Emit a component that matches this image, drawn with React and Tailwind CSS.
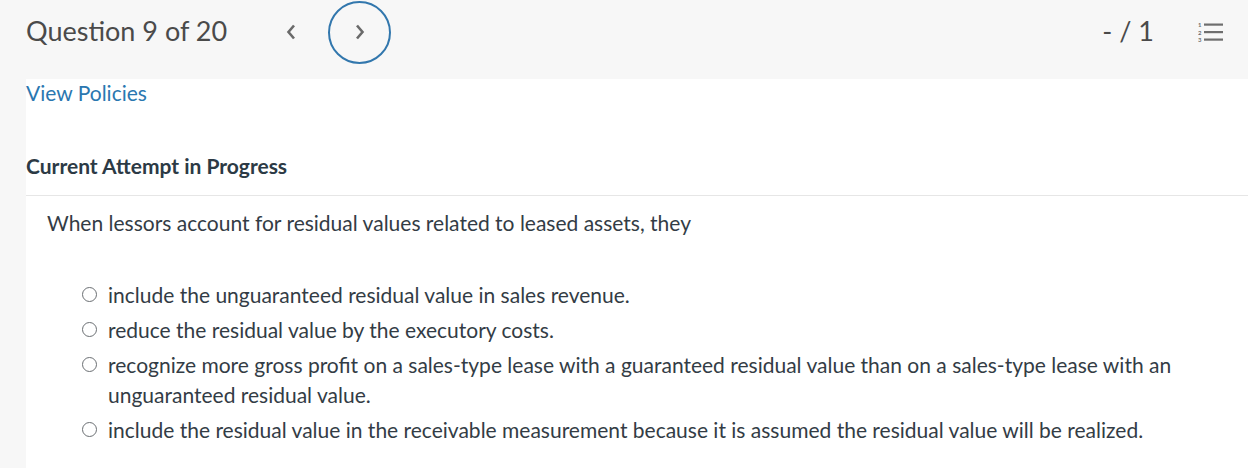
function Radio() {
  return (
    <span className="mt-[7px] w-[15px] h-[15px] rounded-full border border-[#6b6f73] shrink-0 bg-white" />
  );
}

function ListIcon() {
  return (
    <svg width="26" height="22" viewBox="0 0 26 22" className="text-[#6e6e6e]">
      <text x="0" y="6" fontSize="6" fill="currentColor" fontFamily="Lato, sans-serif" fontWeight="700">1</text>
      <text x="0" y="13.5" fontSize="6" fill="currentColor" fontFamily="Lato, sans-serif" fontWeight="700">2</text>
      <text x="0" y="21" fontSize="6" fill="currentColor" fontFamily="Lato, sans-serif" fontWeight="700">3</text>
      <rect x="6" y="2.5" width="19" height="2.2" fill="currentColor" />
      <rect x="6" y="10" width="19" height="2.2" fill="currentColor" />
      <rect x="6" y="17.5" width="19" height="2.2" fill="currentColor" />
    </svg>
  );
}

const options = [
  "include the unguaranteed residual value in sales revenue.",
  "reduce the residual value by the executory costs.",
  "recognize more gross profit on a sales-type lease with a guaranteed residual value than on a sales-type lease with an unguaranteed residual value.",
  "include the residual value in the receivable measurement because it is assumed the residual value will be realized.",
];

export default function App() {
  return (
    <div className="w-[1248px] h-[468px] bg-[#f7f7f7] font-['Lato',sans-serif] overflow-hidden">
      <header className="h-[79px] flex items-start pt-[1px] pl-[26px] pr-[24px]">
        <div className="flex items-center h-[62px]">
          <h1 className="text-[27px] text-[#4a4a4a] leading-none -mt-[3px]">Question 9 of 20</h1>
          <button className="ml-[44px] w-[40px] h-[40px] flex items-center justify-center text-[#6a6a6a]">
            <svg width="10" height="16" viewBox="0 0 10 16">
              <path d="M8 1.5 L2.5 8 L8 14.5" fill="none" stroke="currentColor" strokeWidth="2.6" />
            </svg>
          </button>
          <button className="ml-[17px] w-[63px] h-[63px] rounded-full border-2 border-[#3277ad] flex items-center justify-center text-[#6a6a6a]">
            <svg width="10" height="16" viewBox="0 0 10 16">
              <path d="M2 1.5 L7.5 8 L2 14.5" fill="none" stroke="currentColor" strokeWidth="2.6" />
            </svg>
          </button>
        </div>
        <div className="ml-auto flex items-center h-[62px]">
          <span className="text-[27px] text-[#4a4a4a] leading-none -mt-[3px]">- / 1</span>
          <span className="ml-[44px] flex items-center">
            <ListIcon />
          </span>
        </div>
      </header>
      <main className="ml-[26px] bg-white h-[389px]">
        <a className="text-[21px] text-[#2a77b0] leading-[28px] block">View Policies</a>
        <h2 className="mt-[44px] text-[21px] font-bold text-[#2c3a45] leading-[30px]">
          Current Attempt in Progress
        </h2>
        <div className="mt-[14px] border-t border-[#e6e6e6]" />
        <p className="mt-[12px] ml-[21px] text-[21px] text-[#333c45] leading-[30px]">
          When lessors account for residual values related to leased assets, they
        </p>
        <ul className="mt-[42px] ml-[56px] pr-[60px] flex flex-col gap-[5px]">
          {options.map((o) => (
            <li key={o} className="flex items-start gap-[11px] text-[21px] text-[#333c45] leading-[30px]">
              <Radio />
              <span>{o}</span>
            </li>
          ))}
        </ul>
      </main>
    </div>
  );
}
